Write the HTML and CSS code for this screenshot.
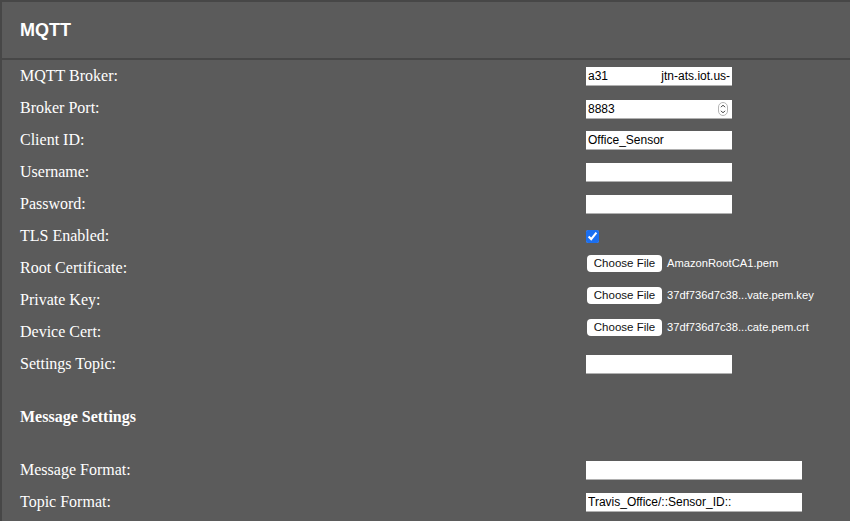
FILE: index.html
```html
<!DOCTYPE html>
<html lang="en">
<head>
<meta charset="UTF-8">
<title>MQTT Settings</title>
<link rel="stylesheet" href="styles.css">
</head>
<body>

<div class="panel">
    <div class="panel-head">MQTT</div>

    <div class="form">
        <div class="row">
            <label>MQTT Broker:</label>
            <div class="field"><input type="text" class="txt" value="a31                jtn-ats.iot.us-east-1.amazonaws.com"></div>
        </div>
        <div class="row">
            <label>Broker Port:</label>
            <div class="field">
                <span class="num-wrap">
                    <input type="text" class="txt" value="8883">
                    <svg class="spin" width="10" height="14" viewBox="0 0 10 14">
                        <rect x="0.5" y="0.5" width="9" height="13" rx="4.5" fill="#fff" stroke="#b5b5b5"/>
                        <path d="M3 5.2 L5 3.2 L7 5.2" fill="none" stroke="#333" stroke-width="1"/>
                        <path d="M3 8.8 L5 10.8 L7 8.8" fill="none" stroke="#333" stroke-width="1"/>
                    </svg>
                </span>
            </div>
        </div>
        <div class="row">
            <label>Client ID:</label>
            <div class="field"><input type="text" class="txt" value="Office_Sensor"></div>
        </div>
        <div class="row">
            <label>Username:</label>
            <div class="field"><input type="text" class="txt"></div>
        </div>
        <div class="row">
            <label>Password:</label>
            <div class="field"><input type="password" class="txt"></div>
        </div>
        <div class="row">
            <label>TLS Enabled:</label>
            <div class="field"><input type="checkbox" class="chk" checked></div>
        </div>
        <div class="row">
            <label>Root Certificate:</label>
            <div class="field file"><span class="file-btn">Choose File</span><span class="file-name">AmazonRootCA1.pem</span></div>
        </div>
        <div class="row">
            <label>Private Key:</label>
            <div class="field file"><span class="file-btn">Choose File</span><span class="file-name">37df736d7c38...vate.pem.key</span></div>
        </div>
        <div class="row">
            <label>Device Cert:</label>
            <div class="field file"><span class="file-btn">Choose File</span><span class="file-name">37df736d7c38...cate.pem.crt</span></div>
        </div>
        <div class="row">
            <label>Settings Topic:</label>
            <div class="field"><input type="text" class="txt"></div>
        </div>

        <div class="sub-head">Message Settings</div>

        <div class="row">
            <label>Message Format:</label>
            <div class="field"><input type="text" class="txt wide"></div>
        </div>
        <div class="row">
            <label>Topic Format:</label>
            <div class="field"><input type="text" class="txt wide" value="Travis_Office/::Sensor_ID::"></div>
        </div>
    </div>
</div>

</body>
</html>
```

FILE: styles.css
```css
body {
margin: 0;
background: #5b5b5b;
color: #fff;
font-family: "Liberation Serif", serif;
}

.panel {
border-top: 2px solid #474747;
border-left: 2px solid #474747;
height: 519px;
overflow: hidden;
}

.panel-head {
height: 56px;
line-height: 56px;
padding-left: 18px;
border-bottom: 2px solid #474747;
font-family: "Liberation Sans", Arial, sans-serif;
font-weight: bold;
font-size: 18px;
}

.form {
padding-left: 18px;
}

.row {
display: grid;
grid-template-columns: 566px auto;
align-items: center;
height: 32px;
font-size: 16px;
}

.field {
display: flex;
align-items: center;
}

.field.file {
margin-bottom: 10px;
}

.txt {
box-sizing: border-box;
width: 146px;
height: 19px;
margin: 1px 0 0 0;
padding: 0 2px;
border: none;
border-bottom: 1px solid #b0b0b0;
background: #fff;
color: #000;
font-family: "Liberation Sans", Arial, sans-serif;
font-size: 12px;
outline: none;
}

.txt.wide {
width: 216px;
}

.num-wrap {
position: relative;
display: inline-block;
height: 19px;
}

.num-wrap .spin {
position: absolute;
top: 3px;
left: 132px;
}

.chk {
margin: 0;
width: 13px;
height: 13px;
accent-color: #1b6ff0;
}

.file-btn {
box-sizing: border-box;
display: inline-block;
width: 75px;
height: 17px;
line-height: 17px;
margin-left: 1px;
border-radius: 4px;
background: #fff;
color: #111;
text-align: center;
font-family: "Liberation Sans", Arial, sans-serif;
font-size: 11.5px;
}

.file-name {
margin-left: 5px;
font-family: "Liberation Sans", Arial, sans-serif;
font-size: 11.2px;
color: #fff;
}

.sub-head {
padding: 29px 0 29px 0;
line-height: 16px;
font-size: 16px;
font-weight: bold;
}
```
